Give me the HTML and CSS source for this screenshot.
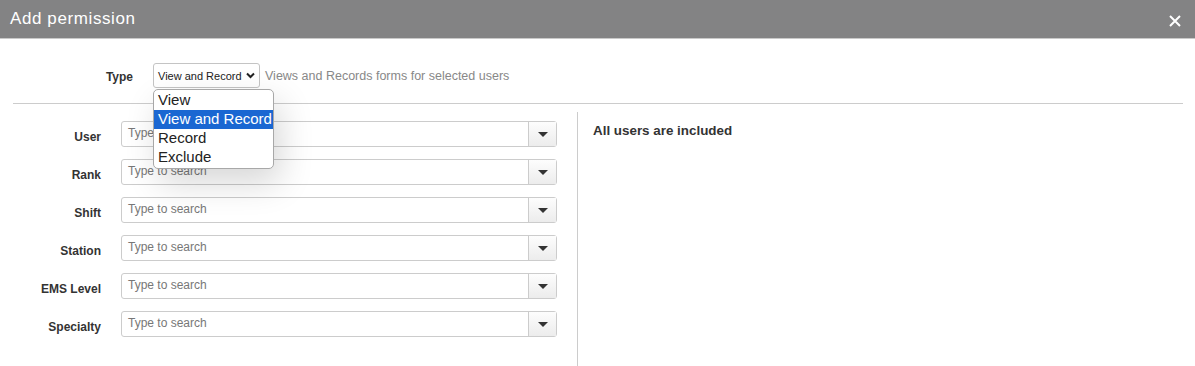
FILE: index.html
```html
<!DOCTYPE html>
<html lang="en">
<head>
    <meta charset="UTF-8">
    <meta name="viewport" content="width=device-width, initial-scale=1.0">
    <title>Add permission</title>
    <link rel="stylesheet" href="styles.css">
</head>
<body>
    <div class="dlg">
        <div class="head">
            <span>Add permission</span>
            <svg class="close" width="12" height="12" viewBox="0 0 12 12"><path d="M1 1 L11 11 M11 1 L1 11" stroke="white" stroke-width="2"/></svg>
        </div>

        <div class="cnt">
            <div class="type">
                <label>Type</label>
                <div class="sel">
                    <span>View and Record</span>
                    <svg width="9" height="7" viewBox="0 0 9 7"><path d="M1 1.5 L4.5 5 L8 1.5" fill="none" stroke="#222" stroke-width="2"/></svg>
                </div>
                <span class="hint">Views and Records forms for selected users</span>

                <ul class="menu">
                    <li>View</li>
                    <li class="on">View and Record</li>
                    <li>Record</li>
                    <li>Exclude</li>
                </ul>
            </div>

            <div class="cols">
                <div class="left">
                    <div class="row"><label>User</label><div class="inp"><span>Type to search</span><div class="btn"><i></i></div></div></div>
                    <div class="row"><label>Rank</label><div class="inp"><span>Type to search</span><div class="btn"><i></i></div></div></div>
                    <div class="row"><label>Shift</label><div class="inp"><span>Type to search</span><div class="btn"><i></i></div></div></div>
                    <div class="row"><label>Station</label><div class="inp"><span>Type to search</span><div class="btn"><i></i></div></div></div>
                    <div class="row"><label>EMS Level</label><div class="inp"><span>Type to search</span><div class="btn"><i></i></div></div></div>
                    <div class="row"><label>Specialty</label><div class="inp"><span>Type to search</span><div class="btn"><i></i></div></div></div>
                </div>
                <div class="right">
                    <strong>All users are included</strong>
                </div>
            </div>
        </div>
    </div>
</body>
</html>
```

FILE: styles.css
```css
body {
    margin: 0;
    font-family: "Liberation Sans", Arial, sans-serif;
    background: white;
    color: #333;
}

.dlg {
    width: 1195px;
    height: 366px;
    overflow: hidden;
}

.head {
    height: 39px;
    background: #838384;
    border-bottom: 1px solid #c9c9c9;
    color: white;
    font-size: 17px;
    letter-spacing: 0.6px;
    display: flex;
    align-items: center;
    justify-content: space-between;
    padding: 0 14px 0 10px;
    box-sizing: border-box;
}

.close {
    margin-top: 4px;
}

.cnt {
    padding: 0 12px 0 13px;
}

.type {
    position: relative;
    display: flex;
    align-items: center;
    height: 25px;
    margin-top: 24px;
    padding-bottom: 15px;
    border-bottom: 1px solid #ccc;
}

.type label {
    width: 120px;
    text-align: right;
    font-size: 12px;
    font-weight: bold;
    margin-right: 20px;
    padding-top: 2px;
}

.sel {
    width: 107px;
    height: 25px;
    box-sizing: border-box;
    border: 1px solid #c4c4c4;
    border-radius: 3px;
    display: flex;
    align-items: center;
    justify-content: space-between;
    padding: 0 4px 0 4px;
    font-size: 11px;
    color: #222;
}

.hint {
    margin-left: 5px;
    font-size: 12.5px;
    color: #888;
}

.menu {
    position: absolute;
    left: 140px;
    top: 26px;
    width: 121px;
    margin: 0;
    padding: 1px 0;
    list-style: none;
    background: white;
    border: 1px solid #a8a8a8;
    border-radius: 5px;
    box-sizing: border-box;
    box-shadow: 6px 14px 34px rgba(0,0,0,0.16);
    font-size: 15px;
    color: #222;
    z-index: 2;
}

.menu li {
    height: 19px;
    line-height: 18px;
    padding-left: 4px;
}

.menu li.on {
    background: #1a67d2;
    color: white;
}

.cols {
    display: flex;
    margin-top: 8px;
}

.left {
    width: 564px;
    border-right: 1px solid #ccc;
    padding-top: 9px;
    display: flex;
    flex-direction: column;
    gap: 12px;
    height: 250px;
}

.row {
    display: flex;
    align-items: center;
}

.row label {
    width: 88px;
    margin-right: 20px;
    text-align: right;
    font-size: 12px;
    font-weight: bold;
    padding-top: 5px;
}

.inp {
    width: 436px;
    height: 26px;
    box-sizing: border-box;
    border: 1px solid #ccc;
    border-radius: 3px;
    display: flex;
    align-items: center;
    justify-content: space-between;
}

.inp span {
    padding-left: 6px;
    font-size: 12px;
    color: #777;
    margin-top: -2px;
}

.btn {
    width: 27px;
    height: 100%;
    border-left: 1px solid #ccc;
    background: linear-gradient(#fdfdfd, #ececec);
    display: flex;
    align-items: center;
    justify-content: center;
}

.btn i {
    width: 0;
    height: 0;
    border-left: 5px solid transparent;
    border-right: 5px solid transparent;
    border-top: 5px solid #333;
}

.right {
    padding: 11px 0 0 15px;
    font-size: 13.4px;
}
```
